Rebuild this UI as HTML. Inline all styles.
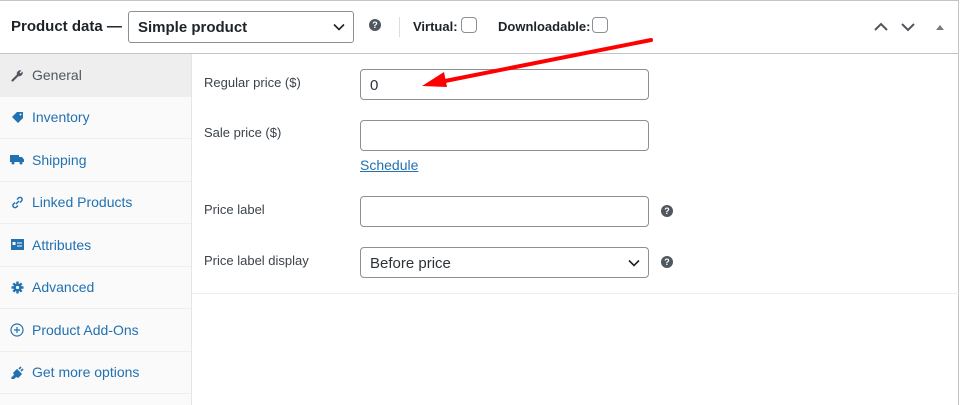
<!DOCTYPE html>
<html><head><style>
*{box-sizing:border-box;margin:0;padding:0}
body{width:960px;height:405px;background:#fff;font-family:"Liberation Sans",Arial,sans-serif;position:relative;overflow:hidden;color:#1d2327}
.box{position:absolute;left:0;top:0;width:959px;height:405px;border-top:1px solid #c3c4c7;border-right:1px solid #c3c4c7}
.hdr{position:absolute;left:0;top:0;width:959px;height:54px;border-bottom:1px solid #c3c4c7}
.abs{position:absolute}
.side{position:absolute;left:0;top:54px;width:192px;height:351px;background:#fafafa;border-right:1px solid #e5e5e5}
.it{height:42.5px;border-bottom:1px solid #eee;display:flex;align-items:center;padding-left:10px;font-size:14px;color:#2271b1}
.it .ic{width:14px;margin-right:8px;display:flex;justify-content:center}
.it.on{background:#eee;color:#50575e;border-bottom:none}
.lbl{position:absolute;left:204px;font-size:13px;color:#3c434a}
.inp{position:absolute;left:360px;width:289px;height:31px;border:1px solid #8c8f94;border-radius:4px;font-size:15px;padding:7px 9px;color:#2c3338}
.q{position:absolute;width:12px;height:12px;border-radius:50%;background:#50575e;color:#fff;font-size:9px;font-weight:bold;text-align:center;line-height:12px}
</style></head><body>
<div class="box"></div>
<div class="hdr"></div>
<div class="abs" style="left:11px;top:18px;font-size:15px;font-weight:bold;color:#1d2327">Product data —</div>
<div class="abs" style="left:128px;top:11px;width:226px;height:32px;border:1px solid #8c8f94;border-radius:3px;font-size:15px;font-weight:bold;padding:7px 9px">Simple product
<svg class="abs" style="right:8px;top:11px" width="12" height="8" viewBox="0 0 12 8"><path d="M1 1.5l5 5 5-5" stroke="#1d2327" stroke-width="1.6" fill="none"/></svg></div>
<div class="q" style="left:369px;top:19px">?</div>
<div class="abs" style="left:399px;top:17px;width:1px;height:20px;background:#ddd"></div>
<div class="abs" style="left:413px;top:19px;font-size:13px;font-weight:bold">Virtual:</div>
<div class="abs" style="left:461px;top:17px;width:16px;height:16px;border:1px solid #8c8f94;border-radius:4px"></div>
<div class="abs" style="left:498px;top:19px;font-size:13px;font-weight:bold">Downloadable:</div>
<div class="abs" style="left:592px;top:17px;width:16px;height:16px;border:1px solid #8c8f94;border-radius:4px"></div>
<svg class="abs" style="left:872px;top:20px" width="80" height="14" viewBox="0 0 80 14"><path d="M3 10l6-6 6 6" stroke="#50575e" stroke-width="2" fill="none"/><path d="M30 4l6 6 6-6" stroke="#50575e" stroke-width="2" fill="none"/><path d="M64 10l4-5 4 5z" fill="#787c82"/></svg>
<div class="side">
<div class="it on"><span class="ic"><svg width="13" height="13" viewBox="0 0 13 13"><path d="M1.5 11.5l5-5" stroke="#50575e" stroke-width="2.2" stroke-linecap="round"/><path d="M6 6a3.5 3.5 0 014.5-4.5L8.5 3.5l1 1 2-2A3.5 3.5 0 017 7z" fill="#50575e"/></svg></span>General</div>
<div class="it"><span class="ic"><svg width="13" height="13" viewBox="0 0 13 13"><path d="M1 6l5-5h6v6l-5 5z" fill="#2271b1"/><circle cx="9.5" cy="3.5" r="1" fill="#fafafa"/></svg></span>Inventory</div>
<div class="it"><span class="ic"><svg width="14" height="11" viewBox="0 0 14 11"><rect x="0" y="1" width="9" height="7" fill="#2271b1"/><path d="M9 3h3l2 2.5V8H9z" fill="#2271b1"/><circle cx="3" cy="9" r="1.5" fill="#2271b1"/><circle cx="11" cy="9" r="1.5" fill="#2271b1"/></svg></span>Shipping</div>
<div class="it"><span class="ic"><svg width="13" height="13" viewBox="0 0 13 13"><path d="M5 8l3-3M6 3.5l1.5-1.5a2 2 0 013 3L9 6.5M7 9.5L5.5 11a2 2 0 01-3-3L4 6.5" stroke="#2271b1" stroke-width="1.5" fill="none"/></svg></span>Linked Products</div>
<div class="it"><span class="ic"><svg width="13" height="11" viewBox="0 0 13 11"><rect x="0" y="0" width="13" height="11" fill="#2271b1"/><rect x="1.5" y="3" width="3" height="3" fill="#fafafa"/><rect x="6" y="3.5" width="5" height="1" fill="#fafafa"/><rect x="6" y="6.5" width="5" height="1" fill="#fafafa"/></svg></span>Attributes</div>
<div class="it"><span class="ic"><svg width="13" height="13" viewBox="0 0 13 13"><g stroke="#2271b1" stroke-width="2.4"><path d="M6.5 0.5v12M0.5 6.5h12M2.3 2.3l8.4 8.4M10.7 2.3l-8.4 8.4"/></g><circle cx="6.5" cy="6.5" r="4" fill="#2271b1"/><circle cx="6.5" cy="6.5" r="1.6" fill="#fafafa"/></svg></span>Advanced</div>
<div class="it"><span class="ic"><svg width="14" height="14" viewBox="0 0 14 14"><circle cx="7" cy="7" r="6" stroke="#2271b1" stroke-width="1.2" fill="none"/><path d="M7 4v6M4 7h6" stroke="#2271b1" stroke-width="1.2"/></svg></span>Product Add-Ons</div>
<div class="it"><span class="ic"><svg width="13" height="13" viewBox="0 0 13 13"><path d="M1 12l3-3-1-2 3-3 4 4-3 3-2-1-3 3zM8 3l2-2M10 5l2-2" stroke="#2271b1" stroke-width="1.6" fill="#2271b1"/></svg></span>Get more options</div>
</div>
<div class="abs" style="left:192px;top:293px;width:767px;height:1px;background:#eee"></div>
<div class="lbl" style="top:75px">Regular price ($)</div>
<div class="inp" style="top:69px">0</div>
<div class="lbl" style="top:125px">Sale price ($)</div>
<div class="inp" style="top:120px"></div>
<div class="abs" style="left:360px;top:157px;font-size:14px;color:#2271b1;text-decoration:underline">Schedule</div>
<div class="lbl" style="top:202px">Price label</div>
<div class="inp" style="top:196px"></div>
<div class="q" style="left:661px;top:205px">?</div>
<div class="lbl" style="top:253px">Price label display</div>
<div class="inp" style="top:247px">Before price
<svg class="abs" style="right:8px;top:11px" width="12" height="8" viewBox="0 0 12 8"><path d="M1 1.5l5 5 5-5" stroke="#1d2327" stroke-width="1.6" fill="none"/></svg></div>
<div class="q" style="left:661px;top:256px">?</div>
<svg class="abs" style="left:0;top:0" width="960" height="405"><path d="M651 40L440 82" stroke="#f00" stroke-width="4" stroke-linecap="round"/><path d="M422 86l22-14 3 15z" fill="#f00"/></svg>
</body></html>
